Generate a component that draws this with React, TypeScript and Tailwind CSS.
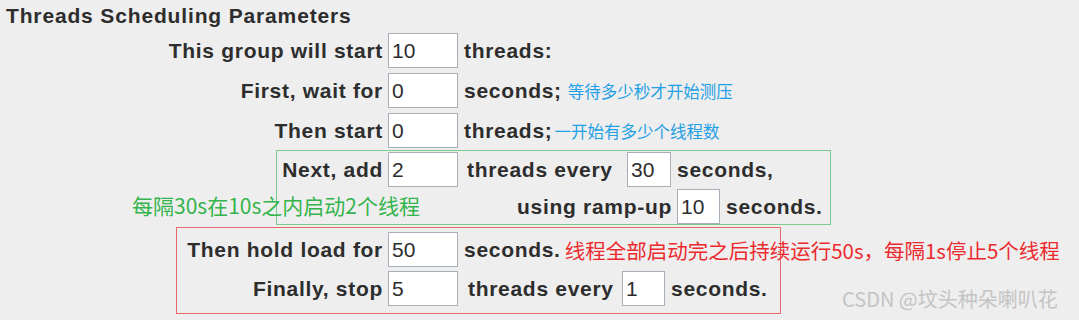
import React from "react";

const labelCls = "shrink-0 text-right pr-[5px] font-bold tracking-[0.7px] whitespace-nowrap";
const textCls = "shrink-0 font-bold tracking-[0.7px] whitespace-nowrap";

function Field({ value, width }: { value: string; width: string }) {
  return (
    <input
      readOnly
      value={value}
      className={`${width} h-[35px] shrink-0 border border-[#a7aeb8] bg-white pl-[3px] text-[21px] text-[#2d2d2d] outline-none`}
    />
  );
}

export default function App() {
  return (
    <div className="relative h-[320px] w-full overflow-hidden bg-[#eeeeee] font-['Liberation_Sans',sans-serif] text-[21px] leading-[24px] text-[#2d2d2d]">
      <div className="h-[33px] pl-[6px] pt-[4px] font-bold tracking-[0.85px]">
        Threads Scheduling Parameters
      </div>

      <div className="flex h-[35px] items-center">
        <div className={`w-[388px] ${labelCls}`}>This group will start</div>
        <Field value="10" width="w-[70px]" />
        <span className={`ml-[6px] ${textCls}`}>threads:</span>
      </div>

      <div className="mt-[5px] flex h-[35px] items-center">
        <div className={`w-[388px] ${labelCls}`}>First, wait for</div>
        <Field value="0" width="w-[70px]" />
        <span className={`ml-[6px] ${textCls}`}>seconds;</span>
        <span className="ml-[6px] shrink-0 whitespace-nowrap font-['Noto_Sans_CJK_SC',sans-serif] text-[16.5px] text-[#1ea0e6]">
          等待多少秒才开始测压
        </span>
      </div>

      <div className="mt-[5px] flex h-[35px] items-center">
        <div className={`w-[388px] ${labelCls}`}>Then start</div>
        <Field value="0" width="w-[70px]" />
        <span className={`ml-[6px] ${textCls}`}>threads;</span>
        <span className="ml-[2px] shrink-0 whitespace-nowrap font-['Noto_Sans_CJK_SC',sans-serif] text-[16.5px] text-[#1ea0e6]">
          一开始有多少个线程数
        </span>
      </div>

      {/* ramp-up block */}
      <div className="ml-[276px] mt-[2px] h-[75px] w-[555px] border border-[#7ccb8d] pt-[1px]">
        <div className="flex h-[35px] items-center">
          <div className={`w-[111px] ${labelCls}`}>Next, add</div>
          <Field value="2" width="w-[70px]" />
          <span className={`w-[169px] pl-[9px] ${textCls}`}>threads every</span>
          <Field value="30" width="w-[44px]" />
          <span className={`ml-[6px] ${textCls}`}>seconds,</span>
        </div>
        <div className="mt-[2px] flex h-[35px] items-center">
          <div className={`w-[400px] ${labelCls}`}>using ramp-up</div>
          <Field value="10" width="w-[43px]" />
          <span className={`ml-[6px] ${textCls}`}>seconds.</span>
        </div>
      </div>

      {/* hold / stop block */}
      <div className="ml-[176px] mt-[2px] h-[87px] w-[605px] border border-[#e86767] pt-[4px]">
        <div className="flex h-[35px] items-center">
          <div className={`w-[211px] ${labelCls}`}>Then hold load for</div>
          <Field value="50" width="w-[70px]" />
          <span className={`ml-[6px] ${textCls}`}>seconds.</span>
          <span className="ml-[4px] shrink-0 whitespace-nowrap font-['Noto_Sans_CJK_SC',sans-serif] text-[20.5px] text-[#ec2a2e]">
            线程全部启动完之后持续运行50s，每隔1s停止5个线程
          </span>
        </div>
        <div className="mt-[4px] flex h-[35px] items-center">
          <div className={`w-[211px] ${labelCls}`}>Finally, stop</div>
          <Field value="5" width="w-[70px]" />
          <span className={`w-[164px] pl-[10px] ${textCls}`}>threads every</span>
          <Field value="1" width="w-[43px]" />
          <span className={`ml-[6px] ${textCls}`}>seconds.</span>
        </div>
      </div>

      <span className="absolute left-[132px] top-[193px] whitespace-nowrap font-['Noto_Sans_CJK_SC',sans-serif] text-[21px] text-[#34b44c]">
        每隔30s在10s之内启动2个线程
      </span>

      <span className="absolute left-[842px] top-[287px] whitespace-nowrap font-['Noto_Sans_CJK_SC',sans-serif] text-[20px] text-[#c4c4c4]">
        CSDN @坟头种朵喇叭花
      </span>
    </div>
  );
}
